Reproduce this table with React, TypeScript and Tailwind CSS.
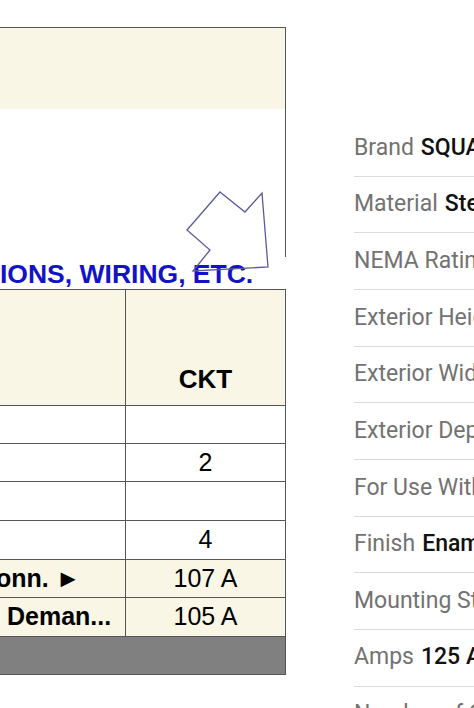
import React from "react";

const specs = [
  { label: "Brand", value: "SQUARE D" },
  { label: "Material", value: "Steel" },
  { label: "NEMA Rating", value: "NEMA 1" },
  { label: "Exterior Height", value: "" },
  { label: "Exterior Width", value: "" },
  { label: "Exterior Depth", value: "" },
  { label: "For Use With", value: "" },
  { label: "Finish", value: "Enamel" },
  { label: "Mounting Style", value: "" },
  { label: "Amps", value: "125 A" },
  { label: "Number of Circuits", value: "" },
];

const rows = [
  { left: "", right: "", h: "h-[38px]", cream: false },
  { left: "", right: "2", h: "h-[38px]", cream: false },
  { left: "", right: "", h: "h-[39px]", cream: false },
  { left: "", right: "4", h: "h-[39px]", cream: false },
  { left: "onn. ►", right: "107 A", h: "h-[38px]", cream: true, shift: "-ml-[4px]" },
  { left: "Deman...", right: "105 A", h: "h-[39px]", cream: true, shift: "pl-[7px]" },
];

const PanelSchedule: React.FC = () => (
  <div className="relative w-[286px] shrink-0 pt-[27px] font-['Liberation_Sans',Arial,sans-serif] text-black">
    <div className="h-[230px] border-t border-r border-[#555]">
      <div className="h-[81px] bg-[#f9f6e5]" />
    </div>
    <div className="h-[32px] whitespace-nowrap pt-[1px] text-[26.5px] font-bold leading-[32px] text-[#1212c8]">
      IONS, WIRING, ETC.
    </div>
    <div className="border-t border-[#555]">
      <div className="flex h-[116px] border-b border-[#555] bg-[#f9f6e5]">
        <div className="w-[126px] border-r border-[#555]" />
        <div className="flex w-[160px] items-end justify-center border-r border-[#555] pb-[6px] text-[26px] font-bold">
          CKT
        </div>
      </div>
      {rows.map((row, i) => (
        <div
          key={i}
          className={`flex ${row.h} border-b border-[#555] ${row.cream ? "bg-[#f9f6e5]" : "bg-white"}`}
        >
          <div className="flex w-[126px] items-center overflow-hidden whitespace-nowrap border-r border-[#555] text-[25px] font-bold">
            <span className={row.shift}>{row.left}</span>
          </div>
          <div className="flex w-[160px] items-center justify-center border-r border-[#555] text-[25px]">
            {row.right}
          </div>
        </div>
      ))}
      <div className="h-[38px] border-r border-b border-[#555] bg-[#808080]" />
    </div>
    <svg className="absolute left-0 top-0" width="286" height="300" viewBox="0 0 286 300">
      <polygon
        points="220,192 245,212 262,193 268,267 193,271 210,250 187,230"
        fill="none"
        stroke="#5a5a9c"
        strokeWidth="1.3"
      />
    </svg>
  </div>
);

const SpecList: React.FC = () => (
  <div className="ml-[68px] min-w-0 flex-1 overflow-hidden pt-[120px] font-['Roboto',sans-serif]">
    {specs.map((s) => (
      <div
        key={s.label}
        className="flex h-[56.67px] items-center whitespace-nowrap border-b border-[#dcdcdc] text-[23px]"
      >
        <span className="text-[#727272]">{s.label}</span>
        {s.value && <span className="ml-[7px] font-medium text-[#111]">{s.value}</span>}
      </div>
    ))}
  </div>
);

export default function App() {
  return (
    <div className="flex h-[708px] w-[474px] overflow-hidden bg-white">
      <PanelSchedule />
      <SpecList />
    </div>
  );
}
